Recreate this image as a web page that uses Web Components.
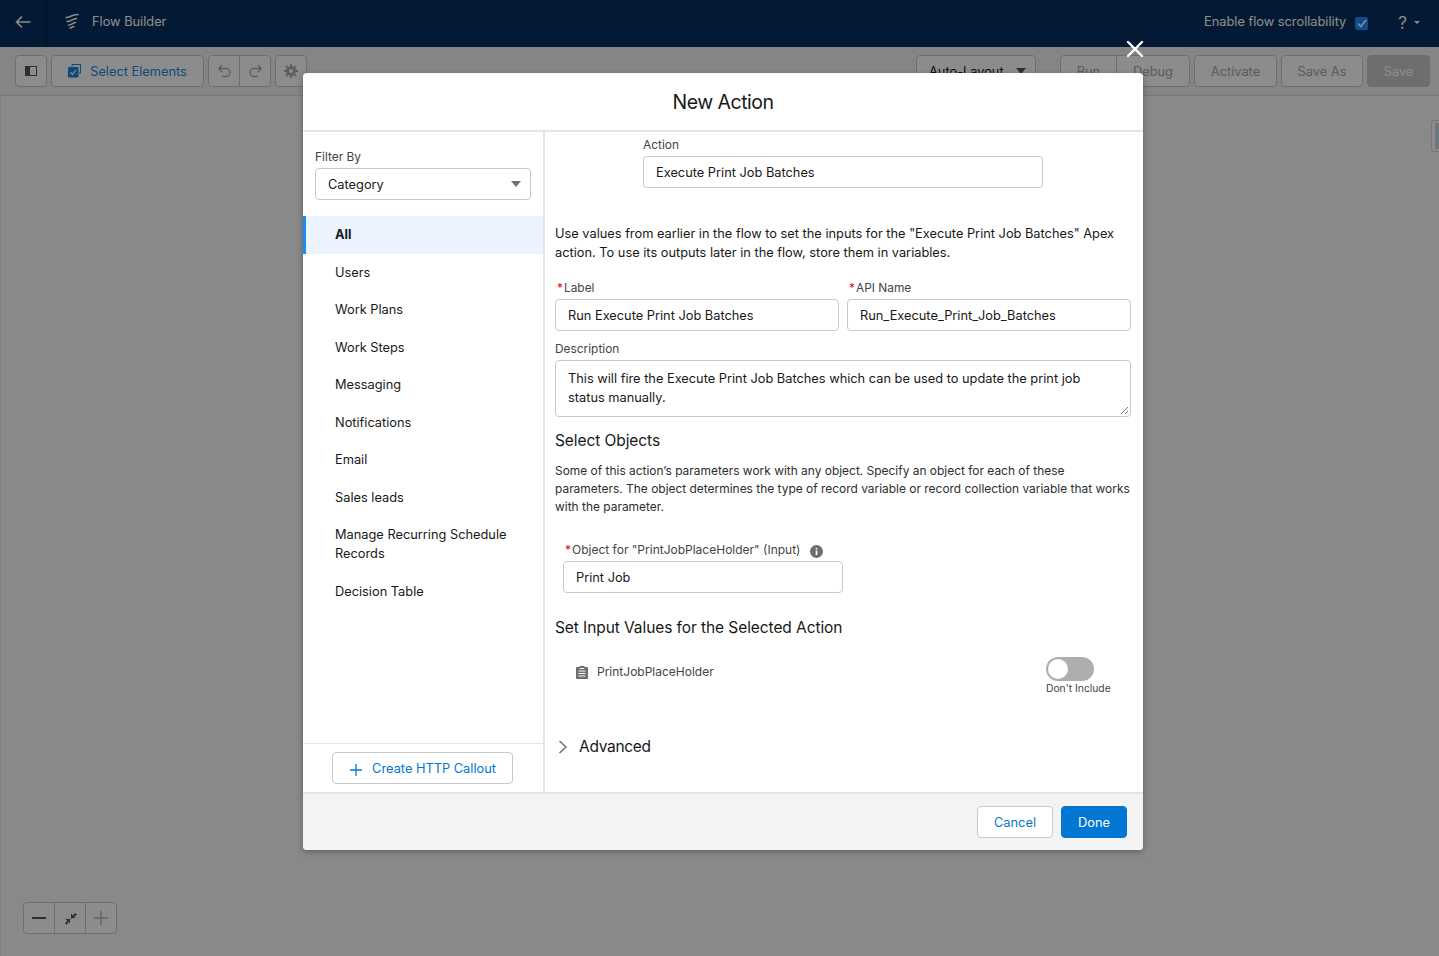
<!DOCTYPE html>
<html lang="en"><head><meta charset="utf-8"><title>Flow Builder</title>
<style>
html,body{margin:0;height:956px;overflow:hidden}
body{font-family:Inter,"Liberation Sans",sans-serif;font-size:12.8px;color:#181818;background:#fafafa}
</style></head><body>
<flow-app>
  <flow-header></flow-header>
  <flow-toolbar></flow-toolbar>
  <flow-canvas></flow-canvas>
</flow-app>
<modal-backdrop></modal-backdrop>
<action-modal>
  <action-filter slot="left"></action-filter>
  <action-form slot="right"></action-form>
</action-modal>
<script>
function def(name, css, html){
  customElements.define(name, class extends HTMLElement{
    constructor(){super();this.attachShadow({mode:'open'}).innerHTML='<style>'+css+'</style>'+html;}
  });
}
const BTN='box-sizing:border-box;height:32px;border:1px solid #c9c9c9;border-radius:4px;background:#fff;display:flex;align-items:center;justify-content:center;';
def('flow-app',':host{display:flex;flex-direction:column;height:956px;width:1439px}','<slot></slot>');
def('flow-header',`:host{display:flex;align-items:center;box-sizing:border-box;height:47px;background:#08305f;color:#fff;flex:none;padding-bottom:5px}
.back{width:47px;height:47px;margin-bottom:-5px;box-sizing:border-box;border-right:1px solid #00000055;display:flex;align-items:center;justify-content:center;padding-bottom:3px}
.logo{margin-left:17px;width:16px;height:16px;display:block}
.t{margin-left:12px;font-size:12.8px}
.sp{flex:1}
.cb{margin-left:9px;width:13px;height:13px;margin-top:5px;border-radius:2px;background:#1c8aff;display:flex;align-items:center;justify-content:center}
.q{margin-left:30px;font-size:17px;margin-top:3px}
.c{margin:3px 19px 0 7px;width:0;height:0;border:3px solid transparent;border-top:3.5px solid #fff;border-bottom:0}`,
`<div class="back"><svg width="16" height="14" viewBox="0 0 16 14" fill="none" stroke="#fff" stroke-width="1.6"><path d="M15.5 7H1.5M7 1.5 1.5 7 7 12.5"/></svg></div>
<svg class="logo" viewBox="0 0 16 16" fill="none" stroke="#fff" stroke-width="1.5" stroke-linecap="round"><path d="M2 4.5C5 5 7.5 1.5 14 1.5M3 8.5C6 9 8 6 12.5 5.5M4.5 12C7 12.5 8 10 11.5 9.5M6 15C7.5 15 8.5 13.5 10 13.5"/></svg>
<span class="t">Flow Builder</span><span class="sp"></span><span>Enable flow scrollability</span>
<span class="cb"><svg width="10" height="9" viewBox="0 0 10 9" fill="none" stroke="#fff" stroke-width="1.6"><path d="M1 4.5 3.8 7.5 9 1"/></svg></span>
<span class="q">?</span><span class="c"></span>`);
def('flow-toolbar',`:host{display:flex;align-items:center;box-sizing:border-box;height:49px;padding:0 9px 1px 15px;background:#f3f3f3;border-bottom:1px solid #d8d8d8;flex:none}
.b{${BTN}font-size:12.8px;padding-top:1px}
.g{display:flex}.g .b:first-child{border-radius:4px 0 0 4px}.g .b:last-child{border-radius:0 4px 4px 0;margin-left:-1px}
.sel{width:153px;margin-left:4px;color:#1589e0;gap:9px}
.ic{width:32px}.g .ic{width:32px}
.m4{margin-left:4px}.sp{flex:1}
.auto{width:120px;justify-content:flex-start;padding-left:12px;gap:12px;color:#181818}
.tri{width:0;height:0;border:5px solid transparent;border-top:6px solid #555;border-bottom:0}
.dis{color:#a6a6a6}
.save{background:#c9c9c9;border-color:#c9c9c9;color:#fff;width:63px}`,
`<div class="b ic"><svg width="12" height="10" viewBox="0 0 12 10"><rect x=".5" y=".5" width="11" height="9" fill="none" stroke="#555"/><rect x="1" y="1" width="4" height="8" fill="#555"/></svg></div>
<div class="b sel"><svg width="13" height="14" viewBox="0 0 13 14"><path d="M4 2.5V.5h8.500v8.500H11" fill="none" stroke="#1589e0"/><rect y="3" width="10.500" height="10.500" rx="1" fill="#1589e0"/><path d="M2.500 8.500 4.500 10.500 8 6" fill="none" stroke="#fff" stroke-width="1.200"/></svg><span>Select Elements</span></div>
<div class="g m4"><div class="b ic"><svg width="13" height="14" viewBox="0 0 13 14" fill="none" stroke="#aaa" stroke-width="1.400"><path d="M1 4.500h7a4 4 0 0 1 0 8H4M4 1 .9 4.500 4 8"/></svg></div><div class="b ic"><svg width="13" height="14" viewBox="0 0 13 14" fill="none" stroke="#aaa" stroke-width="1.400"><path d="M12 4.500H5a4 4 0 0 0 0 8h4M9 1l3.100 3.500L9 8"/></svg></div></div>
<div class="b ic m4"><svg width="14" height="14" viewBox="0 0 14 14" fill="none" stroke="#aaa" stroke-width="3" ><circle cx="7" cy="7" r="3.500"/><path stroke-width="1.800" d="M7 0v2M7 12v2M0 7h2M12 7h2M2 2l1.500 1.500M10.500 10.500 12 12M2 12l1.500-1.500M10.500 3.500 12 2"/></svg></div>
<span class="sp"></span>
<div class="b auto"><span>Auto-Layout</span><span class="tri"></span></div>
<div class="g" style="margin-left:24px"><div class="b dis" style="width:57px">Run</div><div class="b dis" style="width:74px">Debug</div></div>
<div class="b dis m4" style="width:83px">Activate</div>
<div class="b dis m4" style="width:82px">Save As</div>
<div class="b save m4">Save</div>`);
def('flow-canvas',`:host{display:block;flex:1;position:relative;background:#fafafa;border-left:1px solid #e5e5e5}
.tab{position:absolute;right:0;top:24px;width:8px;height:32px;box-sizing:border-box;border:1px solid #d8d8d8;border-right:0;border-radius:4px 0 0 4px;background:#fff;padding:2px 0 2px 3px}
.tab i{display:block;height:100%;background:#c2dce8}
.z{position:absolute;left:22px;bottom:22px;display:flex;box-sizing:border-box;border:1px solid #c9c9c9;border-radius:4px;background:#fff;height:32px}
.z div{box-sizing:border-box;width:31px;display:flex;align-items:center;justify-content:center;border-left:1px solid #c9c9c9}.z div:first-child{border-left:0;width:30px}`,
`<div class="tab"><i></i></div>
<div class="z"><div><svg width="14" height="2"><rect width="14" height="2" fill="#555"/></svg></div>
<div><svg width="13" height="13" viewBox="0 0 13 13" fill="#555"><path d="M7 6 11 1 13 2.500 7.500 7ZM6 7 1 11 2.500 13 6.500 7.500Z"/><path d="M7 1.500V6H11.500ZM1.500 7H6V11.500Z"/></svg></div>
<div><svg width="14" height="14" viewBox="0 0 14 14" fill="#c9c9c9"><path d="M6 0h2v6h6v2H8v6H6V8H0V6h6z"/></svg></div></div>`);
def('modal-backdrop',':host{position:absolute;inset:0;background:rgba(0,0,0,.45)}','');
def('action-modal',`:host{position:absolute;left:303px;top:73px;width:840px;height:777px;background:#fff;border-radius:4px;display:flex;flex-direction:column;box-shadow:0 2px 6px rgba(0,0,0,.3)}
.x{position:absolute;left:823px;top:-33px;width:18px;height:18px}
header{flex:none;box-sizing:border-box;height:59px;border-bottom:2px solid #e5e5e5;display:flex;align-items:center;justify-content:center;font-size:19.5px;letter-spacing:-.5px;border-radius:4px 4px 0 0}
.body{flex:1;display:flex;min-height:0}
.l{flex:none;width:242px;box-sizing:border-box;border-right:2px solid #e5e5e5;display:flex}
.r{flex:1;min-width:0}
footer{flex:none;box-sizing:border-box;height:58px;background:#f3f3f3;border-top:2px solid #e5e5e5;border-radius:0 0 4px 4px;display:flex;align-items:center;justify-content:flex-end;padding:0 16px 0 0;gap:8px}
.b{${BTN}font-size:12.8px;color:#0176d3}
.done{background:#0176d3;border-color:#0176d3;color:#fff;width:66px}.c{width:76px}`,
`<svg class="x" viewBox="0 0 18 18" stroke="#fff" stroke-width="2.400" stroke-linecap="round"><path d="M2 2 16 16M16 2 2 16"/></svg>
<header>New Action</header>
<div class="body"><div class="l"><slot name="left"></slot></div><div class="r"><slot name="right"></slot></div></div>
<footer><div class="b c">Cancel</div><div class="b done">Done</div></footer>`);
def('action-filter',`:host{display:flex;flex-direction:column;width:100%;height:100%}
.top{padding:17px 12px 16px 12px}
label{display:block;font-size:11.9px;color:#444;line-height:16px;margin-bottom:3px}
.s{box-sizing:border-box;height:32px;border:1px solid #c9c9c9;border-radius:4px;display:flex;align-items:center;justify-content:space-between;padding:0 9px 0 12px}
.tri{width:0;height:0;border:5.500px solid transparent;border-top:6.500px solid #707070;border-bottom:0}
ul{list-style:none;margin:0;padding:0;flex:1}
li{padding:9.250px 32px;line-height:19px;box-sizing:border-box}
li.on{font-weight:700;background:#eaf3fe;border-left:3px solid #1b8cf2;padding-left:29px}
.f{flex:none;height:49px;border-top:1px solid #e5e5e5;box-sizing:border-box;display:flex;justify-content:center;padding-top:8px;padding-right:1px}
.b{${BTN}width:181px;color:#0176d3;gap:10px}`,
`<div class="top"><label>Filter By</label><div class="s"><span>Category</span><span class="tri"></span></div></div>
<ul><li class="on">All</li><li>Users</li><li>Work Plans</li><li>Work Steps</li><li>Messaging</li><li>Notifications</li><li>Email</li><li>Sales leads</li><li>Manage Recurring Schedule Records</li><li>Decision Table</li></ul>
<div class="f"><div class="b"><svg width="12" height="12" viewBox="0 0 13 13" fill="#0176d3" style="margin:3px 0 0 1px"><path d="M5.800 0h1.400v5.800H13v1.400H7.200V13H5.800V7.200H0V5.800h5.800z"/></svg><span>Create HTTP Callout</span></div></div>`);
def('action-form',`:host{display:block;box-sizing:border-box;height:100%;padding:5px 12px 0 10px}
label{display:block;font-size:11.9px;color:#444;line-height:16px;margin-bottom:3px}
label b{color:#ea001e;font-weight:400;margin:0 1px 0 2px}
.i{box-sizing:border-box;height:32px;border:1px solid #c9c9c9;border-radius:4px;display:flex;align-items:center;padding:0 12px;background:#fff}
.a{margin-left:88px;width:400px}
p{margin:0}
.intro{margin-top:36px;line-height:19px}
.two{display:grid;grid-template-columns:1fr 1fr;gap:8px;margin-top:18px}
.ta{box-sizing:border-box;height:57px;border:1px solid #c9c9c9;border-radius:4px;padding:8px 12px;line-height:19px;position:relative}
.ta svg{position:absolute;right:1px;bottom:1px}
.d{margin-top:10px}
h3{font-weight:400;font-size:15.5px;letter-spacing:-.08px;line-height:20px;margin:0}
.so{margin-top:14px}
.sm{font-size:11.95px;line-height:18px;margin-top:11px;color:#2e2e2e}
.ob{margin:26px 0 0 8px;width:280px}
.ob label{display:flex;align-items:center;white-space:nowrap;margin-bottom:3px;font-size:12px}
.ob svg{margin:2px 0 0 9px}
.sv{margin-top:25px}
.row{display:flex;margin:19px 0 0 21px;height:40px;align-items:flex-start}
.pj{display:flex;align-items:center;gap:9px;font-size:12px;color:#444;margin-top:7px}
.sp{flex:1}
.tw{width:65px;margin-right:20px;font-size:10.300px;color:#444;white-space:nowrap}
.tg{display:block;box-sizing:border-box;width:48px;height:24px;border-radius:12px;background:#aeaeae;padding:2px;margin-bottom:1px}
.tg i{display:block;width:20px;height:20px;border-radius:50%;background:#fff}
.adv{display:flex;align-items:center;gap:11px;margin:40px 0 0 3px;font-size:15.5px;letter-spacing:-.3px;line-height:20px}`,
`<div class="a"><label>Action</label><div class="i">Execute Print Job Batches</div></div>
<p class="intro">Use values from earlier in the flow to set the inputs for the "Execute Print Job Batches" Apex action. To use its outputs later in the flow, store them in variables.</p>
<div class="two"><div><label><b>*</b>Label</label><div class="i">Run Execute Print Job Batches</div></div><div><label><b>*</b>API Name</label><div class="i">Run_Execute_Print_Job_Batches</div></div></div>
<div class="d"><label>Description</label><div class="ta">This will fire the Execute Print Job Batches which can be used to update the print job status manually.<svg width="9" height="9" viewBox="0 0 9 9" stroke="#777" fill="none"><path d="M1 8 8 1M5 8 8 5"/></svg></div></div>
<h3 class="so">Select Objects</h3>
<p class="sm">Some of this action’s parameters work with any object. Specify an object for each of these parameters. The object determines the type of record variable or record collection variable that works with the parameter.</p>
<div class="ob"><label><b>*</b>Object for "PrintJobPlaceHolder" (Input)<svg width="13" height="13" viewBox="0 0 13 13"><circle cx="6.500" cy="6.500" r="6.500" fill="#706e6b"/><path d="M5.700 5.500h1.600v4.500H5.700zM5.700 3h1.600v1.500H5.700z" fill="#fff"/></svg></label><div class="i">Print Job</div></div>
<h3 class="sv">Set Input Values for the Selected Action</h3>
<div class="row"><div class="pj"><svg width="12" height="14" viewBox="0 0 12 14"><path fill="#706e6b" d="M1 2h2.500V1h5v1H11a1 1 0 0 1 1 1v10a1 1 0 0 1-1 1H1a1 1 0 0 1-1-1V3a1 1 0 0 1 1-1z"/><path stroke="#fff" d="M2.500 6h7M2.500 8.500h7M2.500 11h7M3.800 3.500h4.400"/></svg><span>PrintJobPlaceHolder</span></div><span class="sp"></span>
<div class="tw"><span class="tg"><i></i></span>Don't Include</div></div>
<div class="adv"><svg width="10" height="14" viewBox="0 0 10 14" fill="none" stroke="#706e6b" stroke-width="1.500"><path d="M1.500 1 8 7l-6.500 6"/></svg><span>Advanced</span></div>`);
</script>
</body></html>
